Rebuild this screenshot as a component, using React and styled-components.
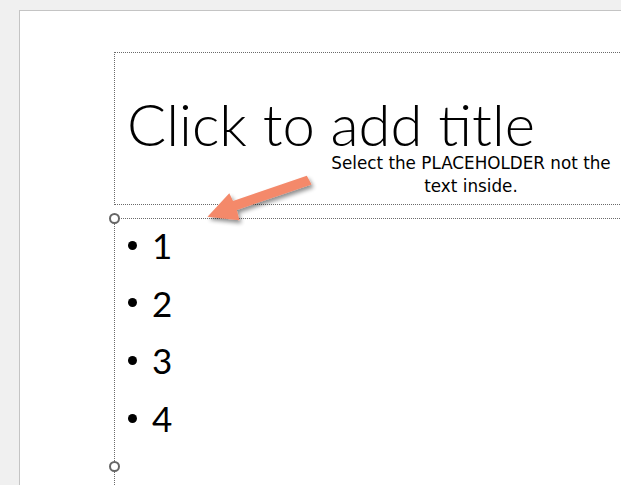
import React from "react";
import styled, { createGlobalStyle } from "styled-components";

const Global = createGlobalStyle`
  html, body { margin: 0; padding: 0; background: #ffffff; }
  body { width: 636px; height: 485px; overflow: hidden; }
`;

const Frame = styled.div`
  position: relative;
  width: 621px;
  height: 485px;
  box-sizing: border-box;
  padding: 10px 0 0 19px;
  background: #f0f0f0;
  overflow: hidden;
  display: flex;
`;

const Slide = styled.div`
  flex: 1;
  background: #ffffff;
  border-top: 1px solid #c4c4c4;
  border-left: 1px solid #c4c4c4;
  padding: 41px 0 0 94px;
  display: flex;
  flex-direction: column;
  gap: 13px;
`;

const TitleBox = styled.div`
  width: 620px;
  height: 153px;
  flex: none;
  border: 1px dotted #6a6a6a;
  border-right: none;
  box-sizing: border-box;
  display: flex;
  align-items: flex-start;
  padding: 48px 0 0 12px;
`;

const Title = styled.div`
  font-family: Lato, "Open Sans", sans-serif;
  font-weight: 300;
  font-size: 58px;
  line-height: 46px;
  height: 46px;
  color: #000;
  white-space: nowrap;
`;

const BodyBox = styled.div`
  position: relative;
  flex: 1;
  border-top: 1px dotted #6a6a6a;
  border-left: 1px dotted #6a6a6a;
  padding: 1px 0 0 14px;
`;

const List = styled.ul`
  list-style: none;
  margin: 0;
  padding: 0;
  display: flex;
  flex-direction: column;
  gap: 7.7px;
`;

const Item = styled.li`
  display: flex;
  align-items: center;
  height: 50px;
  font-family: Lato, "Open Sans", sans-serif;
  font-size: 35px;
  color: #000;
`;

const Dot = styled.span`
  width: 9px;
  height: 9px;
  border-radius: 50%;
  background: #000;
  margin: 0 15px 0 -1px;
`;

const Handle = styled.span`
  position: absolute;
  left: ${(p) => p.$x}px;
  top: ${(p) => p.$y}px;
  width: 11px;
  height: 11px;
  box-sizing: border-box;
  border: 2px solid #666666;
  border-radius: 50%;
  background: #fff;
`;

const Note = styled.div`
  position: absolute;
  left: 318px;
  top: 152px;
  width: 306px;
  text-align: center;
  font-family: "DejaVu Sans", Verdana, sans-serif;
  font-size: 16.8px;
  line-height: 23px;
  color: #000;
`;

const ArrowSvg = styled.svg`
  position: absolute;
  left: 0;
  top: 0;
  overflow: visible;
`;

export default function App() {
  return (
    <>
      <Global />
      <Frame>
        <Slide>
          <TitleBox>
            <Title>Click to add title</Title>
          </TitleBox>
          <BodyBox>
            <List>
              {["1", "2", "3", "4"].map((n) => (
                <Item key={n}>
                  <Dot />
                  {n}
                </Item>
              ))}
            </List>
          </BodyBox>
        </Slide>
        <Note>
          Select the PLACEHOLDER not the
          <br />
          text inside.
        </Note>
        <ArrowSvg width="621" height="485" viewBox="0 0 621 485">
          <defs>
            <filter id="sh" x="-20%" y="-40%" width="140%" height="180%">
              <feGaussianBlur in="SourceAlpha" stdDeviation="2" />
              <feOffset dx="2" dy="3" result="b" />
              <feComponentTransfer>
                <feFuncA type="linear" slope="0.45" />
              </feComponentTransfer>
              <feMerge>
                <feMergeNode />
                <feMergeNode in="SourceGraphic" />
              </feMerge>
            </filter>
          </defs>
          <polygon
            points="207.5,216.8 229.3,193.3 233,201 306.8,175.8 311.6,184.4 236.8,210 239.5,220.2"
            fill="#f4896b"
            filter="url(#sh)"
          />
        </ArrowSvg>
        <Handle $x={108.5} $y={212.5} />
        <Handle $x={108.5} $y={460.5} />
      </Frame>
    </>
  );
}
